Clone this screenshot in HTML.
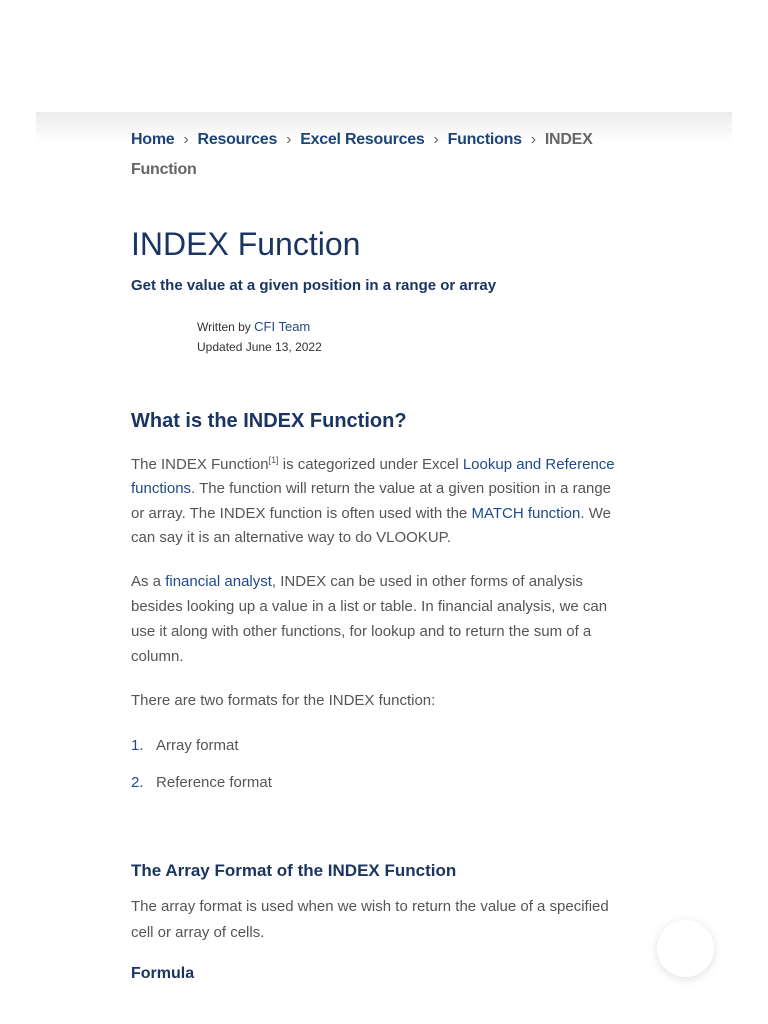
<!DOCTYPE html>
<html><head><meta charset="utf-8"><style>
body{margin:0;width:768px;height:1024px;background:#fff;position:relative;overflow:hidden;font-family:"Liberation Sans",sans-serif;}
.band{position:absolute;left:36px;top:112px;width:696px;height:30px;background:linear-gradient(#ececec,#fff);}
.t{position:absolute;white-space:nowrap;}
.bc{font-size:16px;font-weight:bold;color:#1d4479;letter-spacing:-0.25px;}
.bc .s{color:#666;font-weight:normal;margin:0 9px;}
.g{color:#666;}
.p{font-size:15px;color:#555;left:131px;}
a{color:#1f4a8a;text-decoration:none;}
.n{color:#1b3563;font-weight:bold;}
.fab{position:absolute;left:657px;top:920px;width:57px;height:57px;border-radius:50%;background:#fff;box-shadow:0 2px 10px rgba(0,0,0,.12);}
</style></head><body>
<div class="band"></div>
<div class="t bc" style="left:131px;top:131px">Home<span class="s">›</span>Resources<span class="s">›</span>Excel Resources<span class="s">›</span>Functions<span class="s">›</span><span class="g">INDEX</span></div>
<div class="t bc g" style="left:131px;top:161px;color:#666">Function</div>
<div class="t n" style="left:131px;top:226px;font-size:32px;font-weight:normal;color:#1b3563">INDEX Function</div>
<div class="t n" style="left:131px;top:277px;font-size:15px">Get the value at a given position in a range or array</div>
<div class="t" style="left:197px;top:319px;font-size:12px;color:#333">Written by <a style="font-size:13px">CFI Team</a></div>
<div class="t" style="left:197px;top:340px;font-size:12px;color:#333">Updated June 13, 2022</div>
<div class="t n" style="left:131px;top:410px;font-size:20px">What is the INDEX Function?</div>
<div class="t p" style="top:455px">The INDEX Function<sup style="font-size:9px">[1]</sup> is categorized under Excel <a>Lookup and Reference</a></div>
<div class="t p" style="top:480px"><a>functions</a>. The function will return the value at a given position in a range</div>
<div class="t p" style="top:505px">or array. The INDEX function is often used with the <a>MATCH function</a>. We</div>
<div class="t p" style="top:529px">can say it is an alternative way to do VLOOKUP.</div>
<div class="t p" style="top:573px">As a <a>financial analyst</a>, INDEX can be used in other forms of analysis</div>
<div class="t p" style="top:598px">besides looking up a value in a list or table. In financial analysis, we can</div>
<div class="t p" style="top:623px">use it along with other functions, for lookup and to return the sum of a</div>
<div class="t p" style="top:648px">column.</div>
<div class="t p" style="top:692px">There are two formats for the INDEX function:</div>
<div class="t p" style="top:737px"><a>1.</a>&nbsp;&nbsp;&nbsp;Array format</div>
<div class="t p" style="top:774px"><a>2.</a>&nbsp;&nbsp;&nbsp;Reference format</div>
<div class="t n" style="left:131px;top:861px;font-size:17px">The Array Format of the INDEX Function</div>
<div class="t p" style="top:898px">The array format is used when we wish to return the value of a specified</div>
<div class="t p" style="top:924px">cell or array of cells.</div>
<div class="t n" style="left:131px;top:965px;font-size:16px">Formula</div>
<div class="fab"></div>
</body></html>
